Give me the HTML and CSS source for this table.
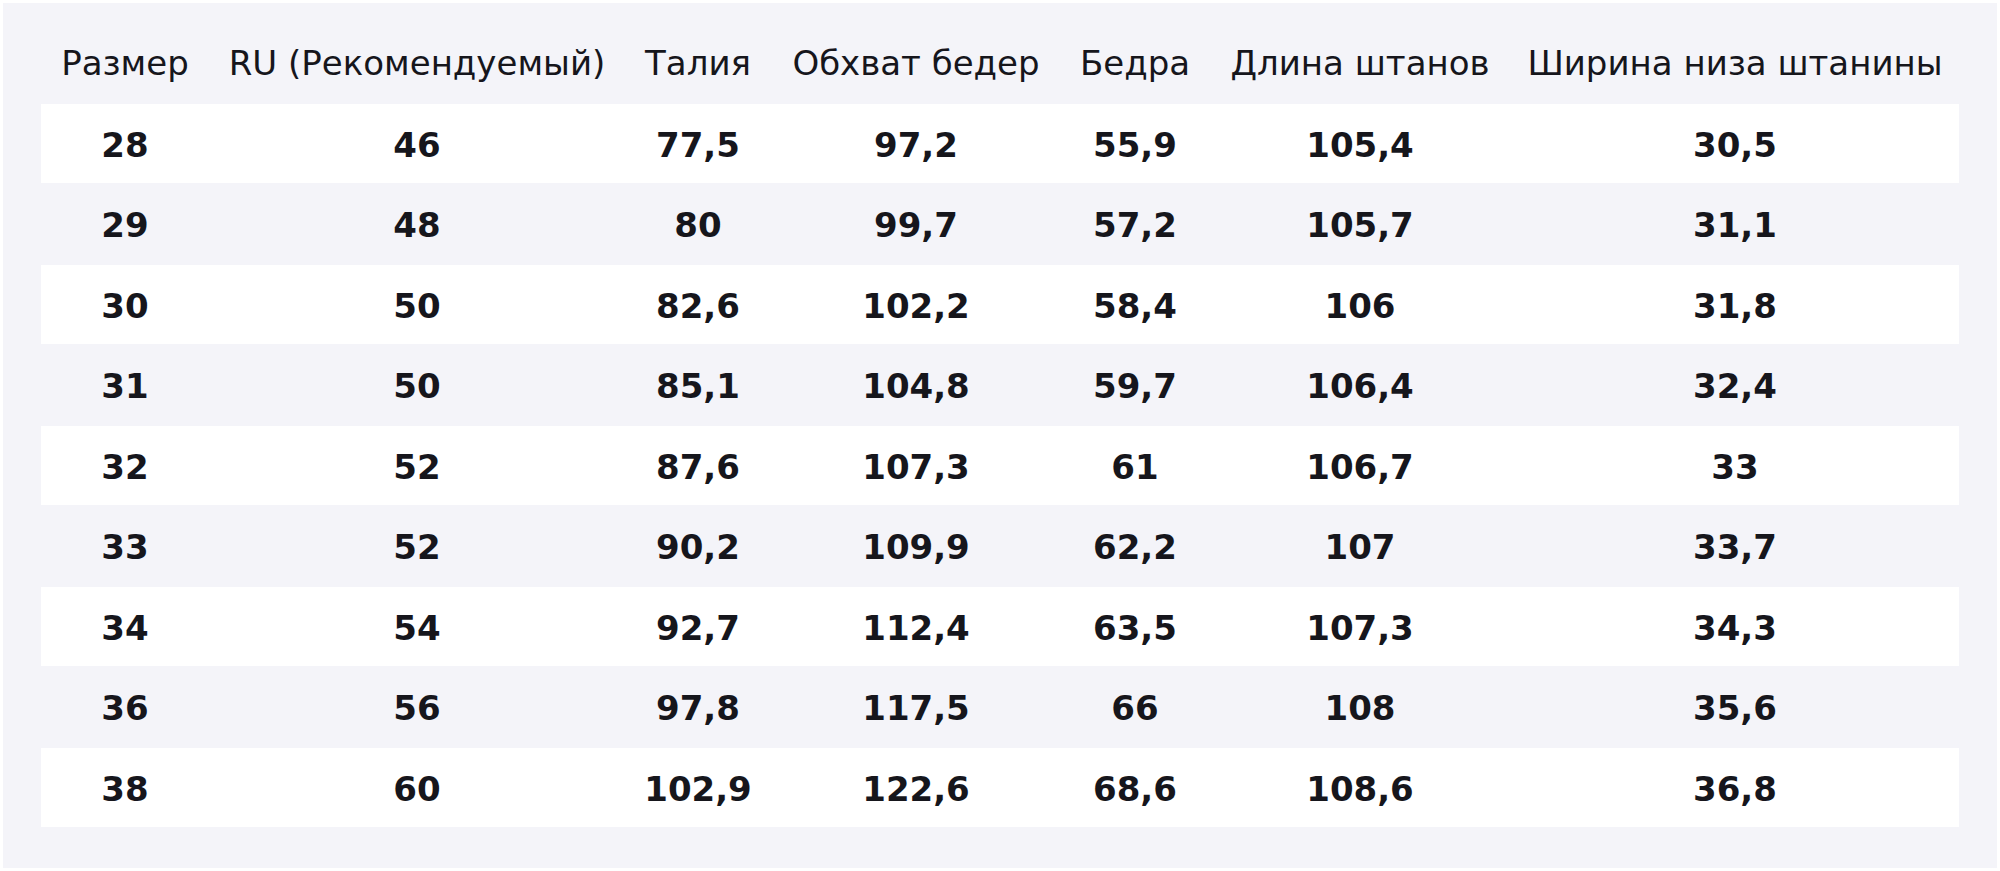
FILE: index.html
```html
<!DOCTYPE html>
<html lang="ru">
<head>
<meta charset="utf-8">
<title>Таблица размеров</title>
<link rel="stylesheet" href="styles.css">
</head>
<body>
<div class="sheet">
<table class="sizes">
<colgroup>
<col class="c-size"><col class="c-ru"><col class="c-waist"><col class="c-hips"><col class="c-thigh"><col class="c-length"><col class="c-hem">
</colgroup>
<thead>
<tr><th>Размер</th><th>RU (Рекомендуемый)</th><th>Талия</th><th>Обхват бедер</th><th>Бедра</th><th>Длина штанов</th><th>Ширина низа штанины</th></tr>
</thead>
<tbody>
<tr><td>28</td><td>46</td><td>77,5</td><td>97,2</td><td>55,9</td><td>105,4</td><td>30,5</td></tr>
<tr><td>29</td><td>48</td><td>80</td><td>99,7</td><td>57,2</td><td>105,7</td><td>31,1</td></tr>
<tr><td>30</td><td>50</td><td>82,6</td><td>102,2</td><td>58,4</td><td>106</td><td>31,8</td></tr>
<tr><td>31</td><td>50</td><td>85,1</td><td>104,8</td><td>59,7</td><td>106,4</td><td>32,4</td></tr>
<tr><td>32</td><td>52</td><td>87,6</td><td>107,3</td><td>61</td><td>106,7</td><td>33</td></tr>
<tr><td>33</td><td>52</td><td>90,2</td><td>109,9</td><td>62,2</td><td>107</td><td>33,7</td></tr>
<tr><td>34</td><td>54</td><td>92,7</td><td>112,4</td><td>63,5</td><td>107,3</td><td>34,3</td></tr>
<tr><td>36</td><td>56</td><td>97,8</td><td>117,5</td><td>66</td><td>108</td><td>35,6</td></tr>
<tr><td>38</td><td>60</td><td>102,9</td><td>122,6</td><td>68,6</td><td>108,6</td><td>36,8</td></tr>
</tbody>
</table>
</div>
</body>
</html>
```
FILE: styles.css
```css
html, body {
  margin: 0;
  padding: 0;
  background: #ffffff;
}
body {
  padding: 3px;
  font-family: "DejaVu Sans", Verdana, sans-serif;
  color: #16161c;
}
.sheet {
  background: #f4f4f9;
  padding: 19px 38px 40px;
  height: 865px;
  box-sizing: border-box;
}
.sizes {
  width: 100%;
  table-layout: fixed;
  border-collapse: collapse;
  border-spacing: 0;
  font-size: 34px;
}
.c-size { width: 168px; }
.c-ru { width: 416px; }
.c-waist { width: 146px; }
.c-hips { width: 290px; }
.c-thigh { width: 148px; }
.c-length { width: 302px; }
.c-hem { width: 448px; }
.sizes th {
  font-weight: normal;
  height: 82px;
  padding: 0;
  text-align: center;
  white-space: nowrap;
  vertical-align: middle;
}
.sizes td {
  font-weight: bold;
  padding: 2px 0 0;
  text-align: center;
  vertical-align: middle;
}
.sizes tbody tr:nth-child(odd) {
  background: #ffffff;
  height: 79px;
}
.sizes tbody tr:nth-child(even) {
  background: transparent;
  height: 82px;
}
```
